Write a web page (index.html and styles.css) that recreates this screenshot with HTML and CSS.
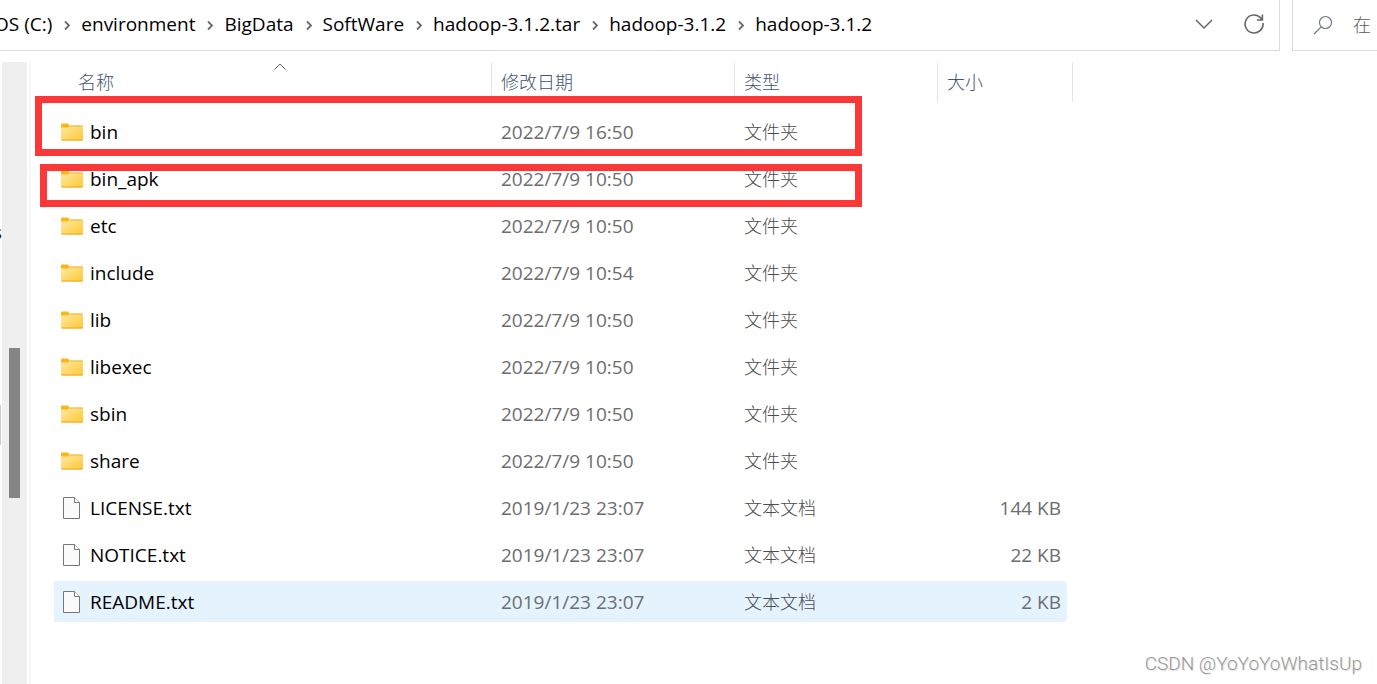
FILE: index.html
```html
<!DOCTYPE html>
<html lang="zh-CN">
<head>
    <meta charset="UTF-8">
    <meta name="viewport" content="width=device-width, initial-scale=1.0">
    <title>hadoop-3.1.2</title>
    <link rel="stylesheet" href="styles.css">
</head>
<body>
    <!-- Shared icons -->
    <svg class="sprite" aria-hidden="true">
        <defs>
            <linearGradient id="folderFill" x1="0" y1="0" x2="1" y2="1">
                <stop offset="0" stop-color="#ffe9a6"/>
                <stop offset="1" stop-color="#ffc935"/>
            </linearGradient>
        </defs>
        <symbol id="folder" viewBox="0 0 22 18">
            <path d="M0 1.5Q0 .5 1 .5H7L8.5 2.5V6H0Z" fill="#fab818"/>
            <path d="M0 4.5H7L9 2.5H21.5L22 3V17L21.5 17.5H.5L0 17Z" fill="url(#folderFill)"/>
            <path d="M8.5 3H21.5" stroke="#efb52c"/>
            <path d="M.5 17H21.5" stroke="#e8a820"/>
        </symbol>
        <symbol id="file" viewBox="0 0 18 22">
            <path d="M.5 .5H11.5L16.5 5.5V21.5H.5Z" fill="#fafafa" stroke="#767676"/>
            <path d="M11.5 .5V5.5H16.5" fill="#fff" stroke="#767676"/>
        </symbol>
        <symbol id="crumb" viewBox="0 0 29 20">
            <path d="M13 7.5L17 11.5L13 15.5" fill="none" stroke="#6b6b6b" stroke-width="1.8"/>
        </symbol>
    </svg>

    <header class="topbar">
        <div class="address">
            <nav class="crumbs">
                <a href="#">OS (C:)</a>
                <svg class="sep"><use href="#crumb"/></svg>
                <a href="#">environment</a>
                <svg class="sep"><use href="#crumb"/></svg>
                <a href="#">BigData</a>
                <svg class="sep"><use href="#crumb"/></svg>
                <a href="#">SoftWare</a>
                <svg class="sep"><use href="#crumb"/></svg>
                <a href="#">hadoop-3.1.2.tar</a>
                <svg class="sep"><use href="#crumb"/></svg>
                <a href="#">hadoop-3.1.2</a>
                <svg class="sep"><use href="#crumb"/></svg>
                <a href="#">hadoop-3.1.2</a>
            </nav>
            <div class="actions">
                <button type="button" aria-label="历史记录">
                    <svg width="20" height="20" viewBox="0 0 20 20" fill="none" stroke="#666" stroke-width="1.5"><path d="M2 6L10 14L18 6"/></svg>
                </button>
                <button type="button" aria-label="刷新">
                    <svg width="20" height="20" viewBox="0 0 20 20" fill="none" stroke="#666" stroke-width="1.6"><path d="M19 9A9 9 0 1 1 17 4.3L18.4 6M18.4 .5V6H13"/></svg>
                </button>
            </div>
        </div>
        <label class="search">
            <svg width="20" height="20" viewBox="0 0 20 20" fill="none" stroke="#6d7480" stroke-width="1.1"><circle cx="12.5" cy="7.5" r="6"/><path d="M8.2 11.8L1 19"/></svg>
            <input type="text" placeholder="在" aria-label="搜索">
        </label>
    </header>

    <main class="content">
        <aside class="tree">
            <span class="tree-item">s</span>
            <span class="tree-mark"></span>
        </aside>
        <div class="scrollbar"><div class="thumb"></div></div>

        <section class="files">
            <table>
                <colgroup>
                    <col class="col-name">
                    <col class="col-date">
                    <col class="col-type">
                    <col class="col-size">
                </colgroup>
                <thead>
                    <tr>
                        <th class="name">名称<svg class="sort" viewBox="0 0 12 7"><path d="M.5 6.5L6 1L11.5 6.5" fill="none" stroke="#666"/></svg></th>
                        <th>修改日期</th>
                        <th>类型</th>
                        <th>大小</th>
                    </tr>
                </thead>
                <tbody>
                    <tr><td><svg class="icon"><use href="#folder"/></svg>bin</td><td>2022/7/9 16:50</td><td class="type">文件夹</td><td></td></tr>
                    <tr><td><svg class="icon"><use href="#folder"/></svg>bin_apk</td><td>2022/7/9 10:50</td><td class="type">文件夹</td><td></td></tr>
                    <tr><td><svg class="icon"><use href="#folder"/></svg>etc</td><td>2022/7/9 10:50</td><td class="type">文件夹</td><td></td></tr>
                    <tr><td><svg class="icon"><use href="#folder"/></svg>include</td><td>2022/7/9 10:54</td><td class="type">文件夹</td><td></td></tr>
                    <tr><td><svg class="icon"><use href="#folder"/></svg>lib</td><td>2022/7/9 10:50</td><td class="type">文件夹</td><td></td></tr>
                    <tr><td><svg class="icon"><use href="#folder"/></svg>libexec</td><td>2022/7/9 10:50</td><td class="type">文件夹</td><td></td></tr>
                    <tr><td><svg class="icon"><use href="#folder"/></svg>sbin</td><td>2022/7/9 10:50</td><td class="type">文件夹</td><td></td></tr>
                    <tr><td><svg class="icon"><use href="#folder"/></svg>share</td><td>2022/7/9 10:50</td><td class="type">文件夹</td><td></td></tr>
                    <tr><td><svg class="icon"><use href="#file"/></svg>LICENSE.txt</td><td>2019/1/23 23:07</td><td class="type">文本文档</td><td>144 KB</td></tr>
                    <tr><td><svg class="icon"><use href="#file"/></svg>NOTICE.txt</td><td>2019/1/23 23:07</td><td class="type">文本文档</td><td>22 KB</td></tr>
                    <tr class="active"><td><svg class="icon"><use href="#file"/></svg>README.txt</td><td>2019/1/23 23:07</td><td class="type">文本文档</td><td>2 KB</td></tr>
                </tbody>
            </table>
            <!-- Red frames around the two bin folders -->
            <div class="mark mark-bin"></div>
            <div class="mark mark-apk"></div>
        </section>
    </main>

    <div class="watermark">CSDN @YoYoYoWhatIsUp</div>
</body>
</html>
```

FILE: styles.css
```css
* {
    box-sizing: border-box;
}

body {
    margin: 0;
    min-height: 100vh;
    display: flex;
    flex-direction: column;
    position: relative;
    overflow: hidden;
    background: #fff;
    color: #000;
    font-family: "Open Sans", "Noto Sans CJK SC", sans-serif;
    font-size: 19px;
    line-height: 24px;
}

.sprite {
    position: absolute;
    width: 0;
    height: 0;
}

/* Address bar */
.topbar {
    display: flex;
    gap: 12px;
    height: 51px;
}

.address {
    flex: 1;
    min-width: 0;
    display: flex;
    align-items: center;
    justify-content: space-between;
    padding: 0 15px 2px 0;
    border-right: 1px solid #d9d9d9;
    border-bottom: 1px solid #d9d9d9;
}

.crumbs {
    display: flex;
    align-items: center;
    margin-left: -6px;
    white-space: nowrap;
}

.crumbs a {
    color: #000;
    text-decoration: none;
}

.sep {
    width: 29px;
    height: 20px;
}

.actions {
    display: flex;
    gap: 30px;
}

.actions button {
    display: flex;
    padding: 0;
    border: none;
    background: none;
}

.search {
    display: flex;
    align-items: center;
    gap: 20px;
    width: 85px;
    padding-left: 20px;
    border-left: 1px solid #d9d9d9;
    border-bottom: 1px solid #d9d9d9;
    font-size: 18px;
}

.search svg {
    flex: none;
}

.search input {
    width: 24px;
    min-width: 0;
    padding: 0;
    border: none;
    outline: none;
    background: none;
    font: inherit;
}

.search input::placeholder {
    color: #5c5c5c;
    font-weight: 300;
}

/* Left strip */
.content {
    flex: 1;
    display: flex;
    padding-top: 11px;
}

.tree {
    width: 2px;
    overflow: hidden;
    display: flex;
    flex-direction: column;
    align-items: flex-end;
    padding-top: 158px;
}

.tree-item {
    color: #1a1a4a;
}

.tree-mark {
    width: 1px;
    height: 40px;
    margin: 161px 1px 0 0;
    background: #ccc;
}

.scrollbar {
    width: 25px;
    padding: 286px 7px 0;
    background: #efefef;
}

.thumb {
    width: 11px;
    height: 150px;
    background: #858585;
}

/* File list */
.files {
    flex: 1;
    position: relative;
    margin-left: 2px;
    padding-left: 23px;
    border-left: 2px solid #f7f7f7;
}

table {
    width: 1019px;
    table-layout: fixed;
    border-collapse: separate;
    border-spacing: 0;
}

.col-name {
    width: 438px;
}

.col-date {
    width: 243px;
}

.col-type {
    width: 203px;
}

.col-size {
    width: 135px;
}

th {
    height: 40px;
    padding: 0 9px;
    border-right: 1px solid #e5e5e5;
    color: #3f5570;
    font-size: 18px;
    font-weight: 300;
    text-align: left;
}

th.name {
    position: relative;
    padding-left: 24px;
}

.sort {
    position: absolute;
    top: 1px;
    left: calc(50% + 1px);
    width: 12px;
    height: 7px;
}

tbody::before {
    content: "";
    display: block;
    height: 6px;
}

td {
    height: 47px;
    padding: 0 9px;
    border: solid transparent;
    border-width: 3px 0;
    background-clip: padding-box;
    color: #6d6d6d;
}

td:first-child {
    padding-left: 7px;
    border-radius: 3px 0 0 3px;
    color: #000;
}

td:last-child {
    padding-right: 6px;
    border-right-width: 6px;
    border-radius: 0 9px 9px 0;
    text-align: right;
}

.type {
    font-size: 18px;
    font-weight: 300;
    color: #4c4c4c;
}

.active td {
    background-color: #e5f3ff;
}

.icon {
    width: 22px;
    height: 22px;
    margin-right: 7px;
    vertical-align: -4px;
}

.mark {
    position: absolute;
    border: 7px solid #fb3838;
}

.mark-bin {
    top: 34px;
    left: 4px;
    width: 827px;
    height: 60px;
}

.mark-apk {
    top: 102px;
    left: 9px;
    width: 822px;
    height: 43px;
}

.watermark {
    position: absolute;
    right: 15px;
    bottom: 8px;
    color: #999;
    font-family: Roboto, sans-serif;
    font-size: 19px;
    font-weight: 300;
    text-shadow: 1px 1px 1px #ddd;
}
```
